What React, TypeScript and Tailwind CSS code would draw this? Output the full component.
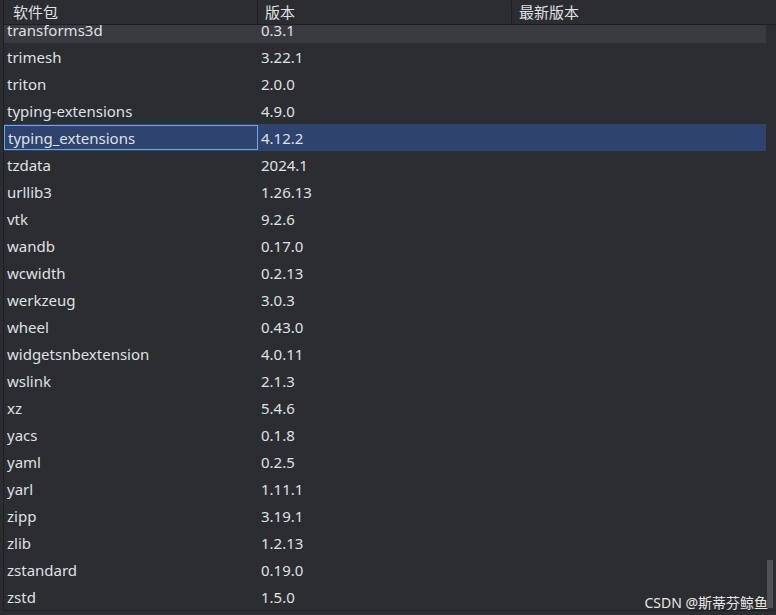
import { useState } from "react";

interface Pkg {
  name: string;
  version: string;
  latest?: string;
}

const packages: Pkg[] = [
  { name: "transforms3d", version: "0.3.1" },
  { name: "trimesh", version: "3.22.1" },
  { name: "triton", version: "2.0.0" },
  { name: "typing-extensions", version: "4.9.0" },
  { name: "typing_extensions", version: "4.12.2" },
  { name: "tzdata", version: "2024.1" },
  { name: "urllib3", version: "1.26.13" },
  { name: "vtk", version: "9.2.6" },
  { name: "wandb", version: "0.17.0" },
  { name: "wcwidth", version: "0.2.13" },
  { name: "werkzeug", version: "3.0.3" },
  { name: "wheel", version: "0.43.0" },
  { name: "widgetsnbextension", version: "4.0.11" },
  { name: "wslink", version: "2.1.3" },
  { name: "xz", version: "5.4.6" },
  { name: "yacs", version: "0.1.8" },
  { name: "yaml", version: "0.2.5" },
  { name: "yarl", version: "1.11.1" },
  { name: "zipp", version: "3.19.1" },
  { name: "zlib", version: "1.2.13" },
  { name: "zstandard", version: "0.19.0" },
  { name: "zstd", version: "1.5.0" },
];

const font = {
  fontFamily: '"Noto Sans", "Noto Sans CJK SC", sans-serif',
};

export default function App() {
  const [selected, setSelected] = useState("typing_extensions");
  const [hovered, setHovered] = useState<string | null>("transforms3d");

  return (
    <div
      className="relative h-[615px] w-[776px] overflow-hidden bg-[#2b2d30] pl-[3px] text-[15px] text-[#dfe1e5]"
      style={font}
    >
      <div className="flex h-[611px] flex-col border-b border-l border-[#1e1f22]">
        {/* header */}
        <div className="flex h-[25px] shrink-0 border-b border-[#1e1f22] pt-[1px] text-[15px] text-[#dfe1e5]">
          <div className="flex w-[254px] items-center border-r border-[#1e1f22] pl-[9px] leading-none">
            软件包
          </div>
          <div className="flex w-[254px] items-center border-r border-[#1e1f22] pl-[7px] leading-none">
            版本
          </div>
          <div className="flex w-[254px] items-center pl-[7px] leading-none">最新版本</div>
        </div>

        {/* body */}
        <div className="flex flex-1 overflow-hidden">
          <div className="-mt-[9px] flex w-[762px] flex-col">
            {packages.map((p) => {
              const isSel = p.name === selected;
              const isHover = !isSel && p.name === hovered;
              return (
                <div
                  key={p.name}
                  onClick={() => setSelected(p.name)}
                  onMouseEnter={() => setHovered(p.name)}
                  className={`flex h-[27px] shrink-0 items-center pt-[2px] ${
                    isSel ? "bg-[#2e436e]" : isHover ? "bg-[#393b40]" : ""
                  }`}
                >
                  <div
                    className={`flex h-full w-[254px] items-center pl-[3px] ${
                      isSel ? "-mt-[2px] h-[27px] border border-[#6aa7e6] pl-[2px] pt-[2px]" : ""
                    }`}
                  >
                    {p.name}
                  </div>
                  <div className="flex h-full w-[254px] items-center pl-[3px]">{p.version}</div>
                  <div className="flex h-full w-[254px] items-center pl-[3px]">{p.latest ?? ""}</div>
                </div>
              );
            })}
          </div>
          {/* scrollbar */}
          <div className="relative w-[10px]">
            <div className="absolute bottom-[2px] left-[1px] h-[48px] w-[6px] bg-[#4e5054]" />
          </div>
        </div>
      </div>

      <span className="absolute bottom-[5px] right-[8px] text-[14px] leading-none text-[#e6e6e6]">
        CSDN @斯蒂芬鲸鱼
      </span>
    </div>
  );
}
